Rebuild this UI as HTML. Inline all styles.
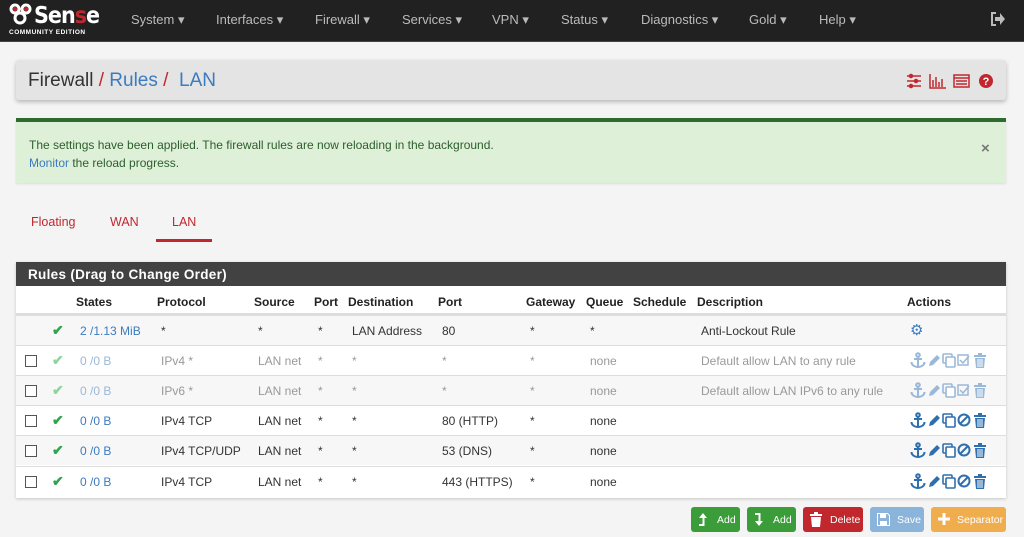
<!DOCTYPE html>
<html><head><meta charset="utf-8"><style>
*{box-sizing:border-box;margin:0;padding:0}
body{width:1024px;height:537px;overflow:hidden;background:#f4f4f4;font-family:"Liberation Sans",sans-serif;font-size:12px;color:#333;position:relative}
.a{position:absolute;white-space:nowrap}
.nav{position:absolute;left:0;top:0;width:1024px;height:42px;background:#212121;border-bottom:1px solid #444}
.nav span{position:absolute;top:12px;color:#bbb;font-size:13px}
.crumb{position:absolute;left:16px;top:60px;width:990px;height:40px;background:#e4e4e4;box-shadow:0 2px 4px rgba(0,0,0,.25);border-radius:3px}
.alert{position:absolute;left:16px;top:118px;width:990px;height:65px;background:#dff0d8;border-top:4px solid #2e6b2e;box-shadow:0 1px 2px rgba(0,0,0,.1)}
.tbl{position:absolute;left:16px;top:262px;width:990px;height:236px;background:#fff;box-shadow:0 1px 3px rgba(0,0,0,.2)}
.th{position:absolute;left:0;top:0;width:990px;height:24px;background:#424242;color:#fff;font-weight:bold;font-size:13.5px;padding:5px 12px;letter-spacing:.3px}
.row{position:absolute;left:0;width:990px;height:30px;border-top:1px solid #ddd}
.row .a{top:8px}
.hd .a{font-weight:bold;color:#222}
.g{color:#999}
.bl{color:#3b7bbf}
.cb{width:12px;height:12px;border:1px solid #555;background:#fff}
.ck{color:#2ea44f;font-size:14px;font-weight:bold}
.btn{position:absolute;top:507px;height:25px;border-radius:3px;color:#fff;font-size:10.5px}
.btn svg,.btn b{position:absolute;top:6px;left:7px}
.btn i{position:absolute;top:7px;font-style:normal}
.ic{position:absolute;left:894px;top:6px!important}
</style></head><body>
<svg width="0" height="0" style="position:absolute">
<defs>
<g id="acts">
 <g fill="none" stroke="currentColor" stroke-width="2"><circle cx="8" cy="3" r="1.8"/><path d="M8 5v10M4 7h8M1.5 10c0 3 3 5 6.5 5s6.5-2 6.5-5"/></g>
 <path d="M19 14l1-4 7-7 3 3-7 7z" fill="currentColor"/>
 <g fill="none" stroke="currentColor" stroke-width="1.6"><rect x="33" y="2" width="9" height="9" rx="1"/><rect x="36" y="5" width="9" height="10" rx="1" fill="#fff"/></g>
</g>
<g id="trash" fill="currentColor"><rect x="0" y="2" width="12" height="2"/><rect x="4" y="0" width="4" height="2"/><path d="M1 5h10l-1 10H2z"/><path d="M4 6v8M6 6v8M8 6v8" stroke="#fff" stroke-width="1"/></g>
</defs></svg>
<div class="nav">
 <div class="a" style="left:8px;top:3px;color:#fff;font-weight:bold;font-size:23px;font-family:'DejaVu Sans Condensed','Liberation Sans',sans-serif;letter-spacing:-1px"><svg width="26" height="22" style="vertical-align:-2px"><g fill="none" stroke="#fff" stroke-width="3"><circle cx="7" cy="6" r="4"/><circle cx="18" cy="6" r="4"/><circle cx="12" cy="15" r="5"/></g><circle cx="7" cy="6" r="2" fill="#c0282e"/><circle cx="18" cy="6" r="2" fill="#c0282e"/></svg>Sen<span style="position:static;color:#c0282e;font-size:23px">s</span>e</div>
 <div class="a" style="left:9px;top:29px;color:#fff;font-size:6.5px;font-weight:bold;letter-spacing:.5px">COMMUNITY EDITION</div>
 <span style="left:131px">System ▾</span><span style="left:216px">Interfaces ▾</span><span style="left:315px">Firewall ▾</span><span style="left:402px">Services ▾</span><span style="left:492px">VPN ▾</span><span style="left:561px">Status ▾</span><span style="left:641px">Diagnostics ▾</span><span style="left:749px">Gold ▾</span><span style="left:819px">Help ▾</span>
 <svg class="a" style="left:990px;top:12px" width="16" height="14"><path d="M6 1H2v12h4" fill="none" stroke="#bbb" stroke-width="2"/><path d="M5 5h5V1l5 6-5 6V9H5z" fill="#bbb"/></svg>
</div>
<div class="crumb">
 <div class="a" style="left:12px;top:10px;font-size:19px;color:#333">Firewall <span style="color:#c0282e">/</span> <span style="color:#3b7bbf">Rules</span> <span style="color:#c0282e">/</span> <span style="color:#3b7bbf">&nbsp;LAN</span></div>
 <svg class="a" style="left:890px;top:13px" width="90" height="16"><g stroke="#c0282e" stroke-width="1.5" fill="#c0282e"><path d="M1 3h14M1 8h14M1 13h14"/><circle cx="5" cy="3" r="1.5"/><circle cx="10" cy="8" r="1.5"/><circle cx="5" cy="13" r="1.5"/><path d="M24 1v14h16M27 7v7M30 4v10M33 9v5M36 6v8" fill="none"/><rect x="48" y="2" width="15" height="12" fill="none"/><path d="M48 5h15M50 8h11M50 11h11" /></g><circle cx="80" cy="8" r="7" fill="#c0282e"/><text x="80" y="12" font-size="11" font-weight="bold" fill="#fff" text-anchor="middle" font-family="Liberation Sans">?</text></svg>
</div>
<div class="alert">
 <div class="a" style="left:13px;top:16px;color:#2c5e2c;font-size:12px">The settings have been applied. The firewall rules are now reloading in the background.</div>
 <div class="a" style="left:13px;top:34px;color:#2c5e2c;font-size:12px"><span style="color:#3b7bbf">Monitor</span> the reload progress.</div>
 <div class="a" style="left:965px;top:18px;color:#777;font-size:15px;font-weight:bold">×</div>
</div>
<div class="a" style="left:31px;top:215px;color:#c0282e;font-size:12.5px">Floating</div>
<div class="a" style="left:110px;top:215px;color:#c0282e;font-size:12.5px">WAN</div>
<div class="a" style="left:172px;top:215px;color:#c0282e;font-size:12.5px">LAN</div>
<div class="a" style="left:156px;top:239px;width:56px;height:3px;background:#c0282e"></div>
<div class="tbl">
 <div class="th">Rules (Drag to Change Order)</div>
 <div class="row hd" style="top:25px;height:28px;border-top:0;border-bottom:2px solid #ddd">
  <div class="a" style="left:60px">States</div><div class="a" style="left:141px">Protocol</div><div class="a" style="left:238px">Source</div><div class="a" style="left:298px">Port</div><div class="a" style="left:332px">Destination</div><div class="a" style="left:422px">Port</div><div class="a" style="left:510px">Gateway</div><div class="a" style="left:570px">Queue</div><div class="a" style="left:617px">Schedule</div><div class="a" style="left:681px">Description</div><div class="a" style="left:891px">Actions</div>
 </div>
 <div class="row" style="top:53px;background:#f7f7f7">
  <div class="a ck" style="left:36px;top:6px">✔</div><div class="a bl" style="left:64px">2 /1.13 MiB</div><div class="a" style="left:145px">*</div><div class="a" style="left:242px">*</div><div class="a" style="left:302px">*</div><div class="a" style="left:336px">LAN Address</div><div class="a" style="left:426px">80</div><div class="a" style="left:514px">*</div><div class="a" style="left:574px">*</div><div class="a" style="left:685px">Anti-Lockout Rule</div><div class="a bl" style="left:894px;top:5px;font-size:15px">⚙</div>
 </div>
 <div class="row g" style="top:83px">
  <div class="a cb" style="left:9px;top:9px"></div><div class="a ck" style="left:36px;top:6px;color:#8fd49f">✔</div><div class="a" style="left:64px;color:#9ab8d8">0 /0 B</div><div class="a" style="left:145px">IPv4 *</div><div class="a" style="left:242px">LAN net</div><div class="a" style="left:302px">*</div><div class="a" style="left:336px">*</div><div class="a" style="left:426px">*</div><div class="a" style="left:514px">*</div><div class="a" style="left:574px">none</div><div class="a" style="left:685px">Default allow LAN to any rule</div>
  <svg class="a ic" width="90" height="17" style="color:#9ab8d8"><use href="#acts"/><path d="M48 3h10v10H48zM50 8l3 3 6-7" fill="none" stroke="currentColor" stroke-width="1.5"/><use href="#trash" x="64" y="1"/></svg>
 </div>
 <div class="row g" style="top:113px;background:#f7f7f7">
  <div class="a cb" style="left:9px;top:9px"></div><div class="a ck" style="left:36px;top:6px;color:#8fd49f">✔</div><div class="a" style="left:64px;color:#9ab8d8">0 /0 B</div><div class="a" style="left:145px">IPv6 *</div><div class="a" style="left:242px">LAN net</div><div class="a" style="left:302px">*</div><div class="a" style="left:336px">*</div><div class="a" style="left:426px">*</div><div class="a" style="left:514px">*</div><div class="a" style="left:574px">none</div><div class="a" style="left:685px">Default allow LAN IPv6 to any rule</div>
  <svg class="a ic" width="90" height="17" style="color:#9ab8d8"><use href="#acts"/><path d="M48 3h10v10H48zM50 8l3 3 6-7" fill="none" stroke="currentColor" stroke-width="1.5"/><use href="#trash" x="64" y="1"/></svg>
 </div>
 <div class="row" style="top:143px">
  <div class="a cb" style="left:9px;top:9px"></div><div class="a ck" style="left:36px;top:6px">✔</div><div class="a bl" style="left:64px">0 /0 B</div><div class="a" style="left:145px">IPv4 TCP</div><div class="a" style="left:242px">LAN net</div><div class="a" style="left:302px">*</div><div class="a" style="left:336px">*</div><div class="a" style="left:426px">80 (HTTP)</div><div class="a" style="left:514px">*</div><div class="a" style="left:574px">none</div>
  <svg class="a ic" width="90" height="17" style="color:#2f6fae"><use href="#acts"/><circle cx="54" cy="8" r="5.5" fill="none" stroke="currentColor" stroke-width="2"/><path d="M50 12l8-8" stroke="currentColor" stroke-width="2"/><use href="#trash" x="64" y="1"/></svg>
 </div>
 <div class="row" style="top:173px;background:#f7f7f7">
  <div class="a cb" style="left:9px;top:9px"></div><div class="a ck" style="left:36px;top:6px">✔</div><div class="a bl" style="left:64px">0 /0 B</div><div class="a" style="left:145px">IPv4 TCP/UDP</div><div class="a" style="left:242px">LAN net</div><div class="a" style="left:302px">*</div><div class="a" style="left:336px">*</div><div class="a" style="left:426px">53 (DNS)</div><div class="a" style="left:514px">*</div><div class="a" style="left:574px">none</div>
  <svg class="a ic" width="90" height="17" style="color:#2f6fae"><use href="#acts"/><circle cx="54" cy="8" r="5.5" fill="none" stroke="currentColor" stroke-width="2"/><path d="M50 12l8-8" stroke="currentColor" stroke-width="2"/><use href="#trash" x="64" y="1"/></svg>
 </div>
 <div class="row" style="top:204px">
  <div class="a cb" style="left:9px;top:9px"></div><div class="a ck" style="left:36px;top:6px">✔</div><div class="a bl" style="left:64px">0 /0 B</div><div class="a" style="left:145px">IPv4 TCP</div><div class="a" style="left:242px">LAN net</div><div class="a" style="left:302px">*</div><div class="a" style="left:336px">*</div><div class="a" style="left:426px">443 (HTTPS)</div><div class="a" style="left:514px">*</div><div class="a" style="left:574px">none</div>
  <svg class="a ic" width="90" height="17" style="color:#2f6fae"><use href="#acts"/><circle cx="54" cy="8" r="5.5" fill="none" stroke="currentColor" stroke-width="2"/><path d="M50 12l8-8" stroke="currentColor" stroke-width="2"/><use href="#trash" x="64" y="1"/></svg>
 </div>
</div>
<div class="btn" style="left:691px;width:49px;background:#3a9d3a"><svg width="10" height="13"><path d="M5 0l4 5H6.5v8H1v-2h3.5V5H1z" fill="#fff"/></svg><i style="left:26px">Add</i></div>
<div class="btn" style="left:747px;width:49px;background:#3a9d3a"><svg width="10" height="13"><path d="M1 0h5.5v8H9l-4 5-4-5h3.5V2H1z" fill="#fff"/></svg><i style="left:26px">Add</i></div>
<div class="btn" style="left:803px;width:60px;background:#c0282e;color:#fff"><svg width="12" height="15" style="color:#fff;top:5px"><use href="#trash"/></svg><i style="left:27px">Delete</i></div>
<div class="btn" style="left:870px;width:54px;background:#8ab4da"><svg width="13" height="13"><path d="M0.5 0.5h10l2 2v10h-12z" fill="none" stroke="#fff"/><rect x="3" y="1" width="6" height="4" fill="#fff"/><rect x="3" y="8" width="7" height="4" fill="#fff"/></svg><i style="left:27px">Save</i></div>
<div class="btn" style="left:931px;width:75px;background:#f0ad4e"><svg width="12" height="12"><path d="M4.5 0h3v4.5H12v3H7.5V12h-3V7.5H0v-3h4.5z" fill="#fff"/></svg><i style="left:26px">Separator</i></div>
</body></html>
